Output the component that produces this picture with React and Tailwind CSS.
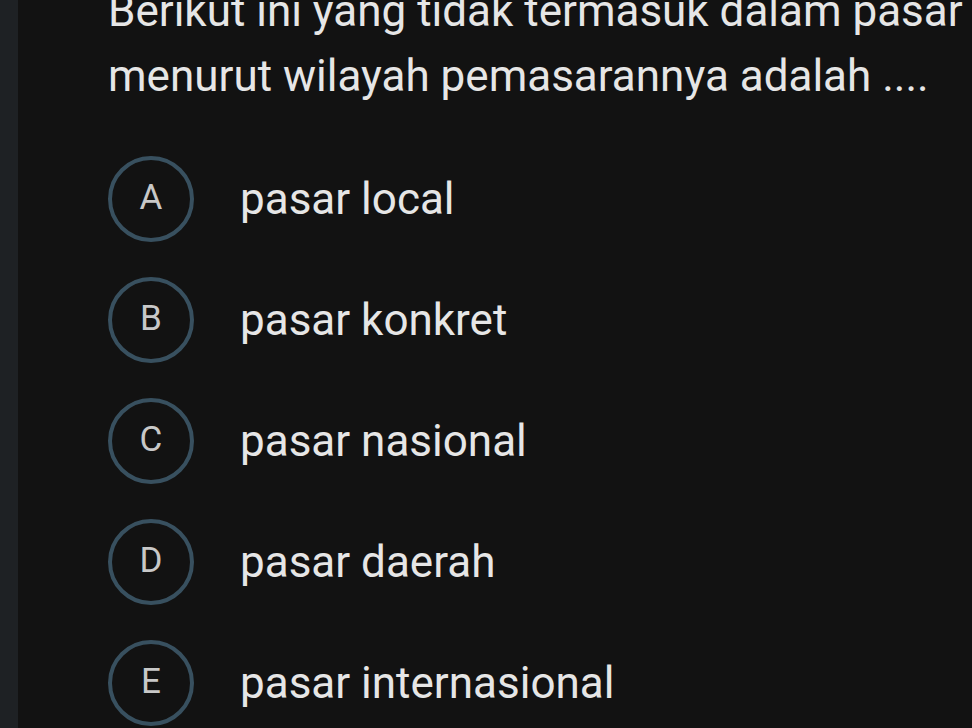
const OPTIONS = [
  { key: 'A', text: 'pasar local' },
  { key: 'B', text: 'pasar konkret' },
  { key: 'C', text: 'pasar nasional' },
  { key: 'D', text: 'pasar daerah' },
  { key: 'E', text: 'pasar internasional' },
];

export default function App() {
  return (
    <div
      className="flex w-[972px] h-[728px] overflow-hidden bg-[#121212]"
      style={{ fontFamily: 'Roboto, "Noto Sans", sans-serif' }}
    >
      <div className="w-[18px] shrink-0 bg-[#1e2124]" />
      <div className="flex-1 pl-[90px] min-w-0 overflow-hidden">
        {/* Question */}
        <div className="-mt-[21px] text-[44px] leading-[65px] text-[#e6e6e6] whitespace-nowrap">
          <div>Berikut ini yang tidak termasuk dalam pasar</div>
          <div>menurut wilayah pemasarannya adalah ....</div>
        </div>

        {/* Options */}
        <div className="mt-[29px] flex flex-col">
          {OPTIONS.map((o) => (
            <div key={o.key} className="flex items-center h-[121px]">
              <div className="w-[86px] h-[86px] shrink-0 rounded-full border-4 border-[#38505f] flex items-center justify-center text-[35px] text-[#c8c8c8]">
                {o.key}
              </div>
              <div className="ml-[46px] text-[44px] text-[#e6e6e6]">{o.text}</div>
            </div>
          ))}
        </div>
      </div>
    </div>
  );
}
